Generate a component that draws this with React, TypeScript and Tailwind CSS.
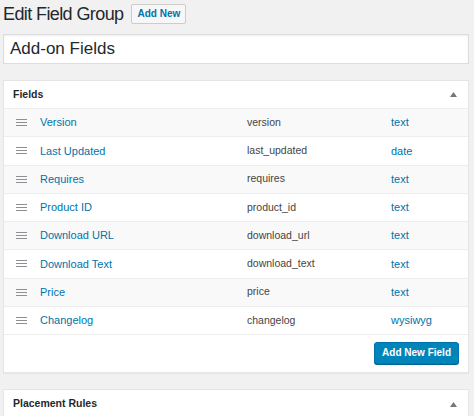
import React from "react";

const rows = [
  { label: "Version", name: "version", type: "text" },
  { label: "Last Updated", name: "last_updated", type: "date" },
  { label: "Requires", name: "requires", type: "text" },
  { label: "Product ID", name: "product_id", type: "text" },
  { label: "Download URL", name: "download_url", type: "text" },
  { label: "Download Text", name: "download_text", type: "text" },
  { label: "Price", name: "price", type: "text" },
  { label: "Changelog", name: "changelog", type: "wysiwyg" },
];

function Handle() {
  return (
    <svg width="11" height="7" viewBox="0 0 11 7" className="shrink-0">
      <rect x="0" y="0" width="11" height="1" fill="#8c8f94" />
      <rect x="0" y="3" width="11" height="1" fill="#8c8f94" />
      <rect x="0" y="6" width="11" height="1" fill="#8c8f94" />
    </svg>
  );
}

function Caret() {
  return (
    <svg width="7" height="5" viewBox="0 0 7 5">
      <polygon points="3.5,0 7,5 0,5" fill="#72777c" />
    </svg>
  );
}

export default function App() {
  return (
    <div className="w-[474px] h-[416px] overflow-hidden bg-[#f1f1f1] font-['Liberation_Sans',Arial,sans-serif] text-[#23282d]">
      <div className="ml-[3px] w-[466px]">
        <div className="h-[27px] flex items-center">
          <h1 className="text-[18px] tracking-[-0.6px] leading-none text-[#23282d] pt-[1px]">Edit Field Group</h1>
          <button className="ml-[8px] h-[20px] px-[5px] border border-[#cccccc] bg-[#f7f7f7] rounded-[2px] text-[10px] font-bold text-[#0073aa] leading-none">
            Add New
          </button>
        </div>
        <div className="mt-[7px] h-[30px] bg-white border border-[#dddddd] shadow-[inset_0_1px_2px_rgba(0,0,0,0.07)] flex items-center pl-[6px] text-[17px] text-[#23282d]">
          Add-on Fields
        </div>

        <div className="mt-[16px] bg-white border border-[#e5e5e5] shadow-[0_1px_1px_rgba(0,0,0,0.04)]">
          <div className="h-[28px] flex items-center justify-between pl-[9px] pr-[11px] border-b border-[#eeeeee]">
            <span className="text-[10.5px] font-bold text-[#23282d]">Fields</span>
            <Caret />
          </div>
          {rows.map((r, i) => (
            <div
              key={r.name}
              className={`h-[28.25px] flex items-center border-b border-[#eeeeee] text-[11px] ${i % 2 === 0 ? "bg-[#f9f9f9]" : "bg-white"}`}
            >
              <div className="w-[36px] pl-[12px] flex items-center">
                <Handle />
              </div>
              <div className="w-[207px] text-[#0073aa]">{r.label}</div>
              <div className="w-[144px] text-[10.5px] text-[#444444]">{r.name}</div>
              <div className="text-[#0073aa]">{r.type}</div>
            </div>
          ))}
          <div className="h-[37px] flex items-start justify-end pt-[7px] pr-[9px]">
            <button className="h-[22px] px-[7px] bg-[#0085ba] border border-[#0073aa] rounded-[3px] text-white text-[10px] font-bold leading-none shadow-[0_1px_0_#006799]">
              Add New Field
            </button>
          </div>
        </div>

        <div className="mt-[16px] bg-white border border-[#e5e5e5]">
          <div className="h-[28px] flex items-center justify-between pl-[9px] pr-[11px]">
            <span className="text-[10.5px] font-bold text-[#23282d]">Placement Rules</span>
            <Caret />
          </div>
          <div className="h-[40px]" />
        </div>
      </div>
    </div>
  );
}
